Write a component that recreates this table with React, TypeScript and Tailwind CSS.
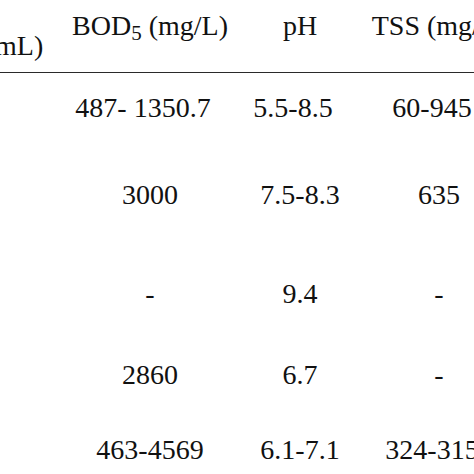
const rows = [
  { h: 'h-[87px]', shift: true, cells: ['', '487- 1350.7', '5.5-8.5', '60-945'] },
  { h: 'h-[99px]', shift: false, cells: ['', '3000', '7.5-8.3', '635'] },
  { h: 'h-[81px]', shift: false, cells: ['', '-', '9.4', '-'] },
  { h: 'h-[75px]', shift: false, cells: ['', '2860', '6.7', '-'] },
  { h: 'h-[40px]', shift: false, cells: ['', '463-4569', '6.1-7.1', '324-3150'] },
];

const cols = 'grid grid-cols-[70px_160px_140px_138px]';

export default function App() {
  return (
    <div className="w-[474px] h-[474px] overflow-hidden bg-white font-['Liberation_Serif','Times_New_Roman',serif] text-[28px] leading-[32px] text-[#111]">
      <div className={`${cols} h-[72px] whitespace-nowrap`}>
        <div className="-ml-[5px] pt-[29.5px] text-left">mL)</div>
        <div className="pt-[9.6px] text-center">
          BOD<sub>5</sub> (mg/L)
        </div>
        <div className="pt-[9.6px] text-center">pH</div>
        <div className="pt-[9.6px] text-center">TSS (mg/L)</div>
      </div>
      <div className="w-full border-t-[1.5px] border-[#2a2a2a]" />
      <div className="pt-[19px] whitespace-nowrap">
        {rows.map((r, i) => (
          <div key={i} className={`${cols} ${r.h}`}>
            {r.cells.map((c, j) => (
              <div key={j} className={`text-center ${r.shift ? 'pr-[14px]' : ''}`}>
                {c}
              </div>
            ))}
          </div>
        ))}
      </div>
    </div>
  );
}
